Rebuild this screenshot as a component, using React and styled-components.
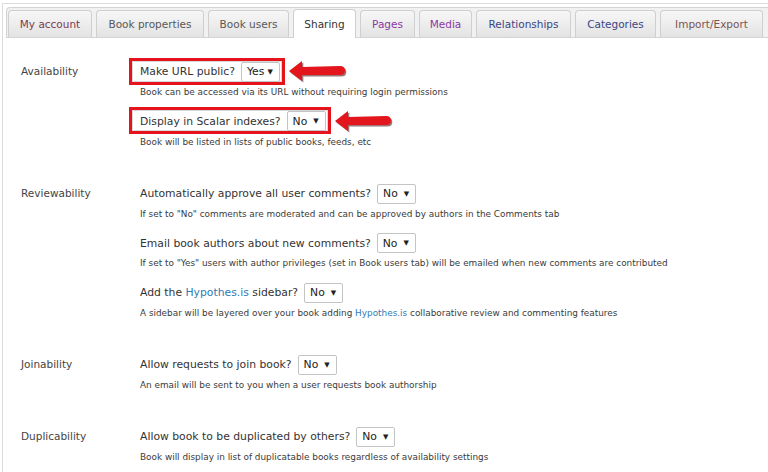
import React from "react";
import styled, { createGlobalStyle } from "styled-components";

const Global = createGlobalStyle`
  html, body { margin: 0; padding: 0; background: #fff; }
  body { font-family: "DejaVu Sans", Verdana, sans-serif; color: #333; }
`;

const Page = styled.div`
  width: 768px;
  height: 472px;
  overflow: hidden;
  padding: 3px 0 0 2px;
  box-sizing: border-box;
`;

const Frame = styled.div`
  border-top: 1px solid #dcdcdc;
  border-left: 1px solid #dcdcdc;
  padding: 3px 0 0 3px;
  height: 100%;
  box-sizing: border-box;
`;

const TabBar = styled.div`
  display: flex;
  align-items: flex-end;
  gap: 4px;
  height: 31px;
  box-sizing: border-box;
  padding-left: 1px;
  background: #f1f1f1;
  border: 1px solid #d4d4d4;
  border-right: none;
  border-radius: 4px 0 0 0;
`;

const Tab = styled.div`
  width: ${(p) => p.$w}px;
  flex: none;
  height: ${(p) => (p.$active ? "29px" : "27px")};
  margin-bottom: ${(p) => (p.$active ? "-1px" : "0")};
  box-sizing: border-box;
  display: flex;
  align-items: center;
  justify-content: center;
  font-size: 10.5px;
  color: ${(p) => p.$color};
  border: 1px solid #cfcfcf;
  border-bottom: none;
  border-radius: 4px 4px 0 0;
  background: ${(p) =>
    p.$active ? "#fff" : "linear-gradient(#f7f7f7, #e3e3e3)"};
  white-space: nowrap;
`;

const Content = styled.div`
  padding: 24px 0 0 15px;
`;

const Section = styled.div`
  display: grid;
  grid-template-columns: 119px 1fr;
  margin-bottom: 22.5px;
`;

const SectionLabel = styled.div`
  font-size: 10.5px;
  line-height: 19px;
  color: #444;
`;

const Fields = styled.div`
  display: flex;
  flex-direction: column;
`;

const Field = styled.div`
  margin-bottom: 13.5px;
`;

const LineWrap = styled.div`
  display: flex;
  align-items: center;
  height: 20px;
`;

const Highlight = styled.div`
  display: flex;
  align-items: center;
  gap: 6px;
  margin: -4px 0 -2px -11px;
  padding: 1px 2px 0 8px;
  border: 3px solid #e5131b;
  box-shadow: inset 0 0 0 1px #d8d8d8;
  background: #fff;
`;

const Line = styled.div`
  display: flex;
  align-items: center;
  gap: 6px;
  height: 20px;
`;

const Question = styled.span`
  font-size: 10.8px;
  color: #333;
  white-space: nowrap;
`;

const Link = styled.span`
  color: #2f7bb5;
`;

const Select = styled.div`
  width: ${(p) => p.$w || 39}px;
  height: 20px;
  box-sizing: border-box;
  border: 1px solid #c4c4c4;
  border-radius: 2px;
  background: #fff;
  display: flex;
  align-items: center;
  justify-content: space-between;
  padding: 0 6px 0 5px;
  font-size: 10.8px;
  color: #222;
`;

const Caret = styled.span`
  font-size: 7px;
  color: #222;
`;

const Desc = styled.div`
  margin-top: 4px;
  font-size: 8.9px;
  line-height: 12px;
  color: #3a3a3a;
  white-space: nowrap;
`;

const ArrowSvg = styled.svg`
  margin-left: 3px;
  flex: none;
`;

const Arrow = () => (
  <ArrowSvg width="60" height="24" viewBox="0 0 60 24">
    <path
      d="M1 11 L14 1 L14 7 L52 6 Q57 6 57 10.5 Q57 15 52 15 L14 15 L14 21 Z"
      fill="#4a0606"
      opacity="0.55"
      transform="translate(1.3 1.6)"
    />
    <path
      d="M1 11 L14 1 L14 7 L52 6 Q57 6 57 10.5 Q57 15 52 15 L14 15 L14 21 Z"
      fill="#e3161d"
    />
  </ArrowSvg>
);

const Sel = ({ v, w }) => (
  <Select $w={w}>
    <span>{v}</span>
    <Caret>▼</Caret>
  </Select>
);

const tabs = [
  ["My account", "#7b3a53", 84],
  ["Book properties", "#585858", 108],
  ["Book users", "#585858", 81],
  ["Sharing", "#333", 63, true],
  ["Pages", "#8c37a6", 55],
  ["Media", "#8c37a6", 53],
  ["Relationships", "#3a4584", 95],
  ["Categories", "#3a4584", 81],
  ["Import/Export", "#7a5656", 103],
];

export default function App() {
  return (
    <>
      <Global />
      <Page>
        <Frame>
          <TabBar>
            {tabs.map(([t, c, w, a]) => (
              <Tab key={t} $color={c} $w={w} $active={a}>
                {t}
              </Tab>
            ))}
          </TabBar>
          <Content>
            <Section>
              <SectionLabel>Availability</SectionLabel>
              <Fields>
                <Field>
                  <LineWrap>
                    <Highlight>
                      <Question>Make URL public?</Question>
                      <Sel v="Yes" />
                    </Highlight>
                    <Arrow />
                  </LineWrap>
                  <Desc>Book can be accessed via its URL without requiring login permissions</Desc>
                </Field>
                <Field>
                  <LineWrap>
                    <Highlight>
                      <Question>Display in Scalar indexes?</Question>
                      <Sel v="No" />
                    </Highlight>
                    <Arrow />
                  </LineWrap>
                  <Desc>Book will be listed in lists of public books, feeds, etc</Desc>
                </Field>
              </Fields>
            </Section>
            <Section>
              <SectionLabel>Reviewability</SectionLabel>
              <Fields>
                <Field>
                  <Line>
                    <Question>Automatically approve all user comments?</Question>
                    <Sel v="No" />
                  </Line>
                  <Desc>If set to "No" comments are moderated and can be approved by authors in the Comments tab</Desc>
                </Field>
                <Field>
                  <Line>
                    <Question>Email book authors about new comments?</Question>
                    <Sel v="No" />
                  </Line>
                  <Desc>If set to "Yes" users with author privileges (set in Book users tab) will be emailed when new comments are contributed</Desc>
                </Field>
                <Field>
                  <Line>
                    <Question>
                      Add the <Link>Hypothes.is</Link> sidebar?
                    </Question>
                    <Sel v="No" />
                  </Line>
                  <Desc>
                    A sidebar will be layered over your book adding <Link>Hypothes.is</Link> collaborative review and commenting features
                  </Desc>
                </Field>
              </Fields>
            </Section>
            <Section>
              <SectionLabel>Joinability</SectionLabel>
              <Fields>
                <Field>
                  <Line>
                    <Question>Allow requests to join book?</Question>
                    <Sel v="No" />
                  </Line>
                  <Desc>An email will be sent to you when a user requests book authorship</Desc>
                </Field>
              </Fields>
            </Section>
            <Section>
              <SectionLabel>Duplicability</SectionLabel>
              <Fields>
                <Field>
                  <Line>
                    <Question>Allow book to be duplicated by others?</Question>
                    <Sel v="No" />
                  </Line>
                  <Desc>Book will display in list of duplicatable books regardless of availability settings</Desc>
                </Field>
              </Fields>
            </Section>
          </Content>
        </Frame>
      </Page>
    </>
  );
}
